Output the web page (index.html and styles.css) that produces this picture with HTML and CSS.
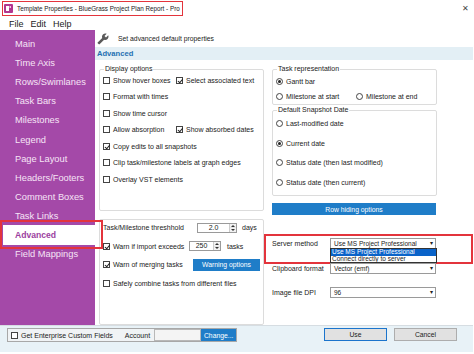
FILE: index.html
```html
<!DOCTYPE html>
<html lang="en">
<head>
  <meta charset="UTF-8" />
  <title>Template Properties</title>
  <link rel="stylesheet" href="styles.css">
</head>
<body>
<div class="window">

  <div class="titlebar">
    <div class="title-box">
      <svg class="app-icon" width="9" height="9" viewBox="0 0 9 9">
        <rect width="9" height="9" rx="1" fill="#b2368f"/>
        <rect x="2" y="2" width="3" height="5" fill="#fff"/>
        <rect x="5.5" y="2" width="1.5" height="2" fill="#f3c6e6"/>
      </svg>
      <span>Template Properties - BlueGrass Project Plan Report - Pro</span>
    </div>
    <span class="close">✕</span>
  </div>

  <div class="menubar">
    <span>File</span>
    <span>Edit</span>
    <span>Help</span>
  </div>

  <div class="main">
    <nav class="sidebar">
      <a>Main</a>
      <a>Time Axis</a>
      <a>Rows/Swimlanes</a>
      <a>Task Bars</a>
      <a>Milestones</a>
      <a>Legend</a>
      <a>Page Layout</a>
      <a>Headers/Footers</a>
      <a>Comment Boxes</a>
      <a>Task Links</a>
      <a class="active">Advanced</a>
      <a>Field Mappings</a>
    </nav>

    <section class="content">
      <div class="page-head">
        <svg class="wrench" width="12" height="12" viewBox="0 0 24 24">
          <path transform="translate(24 0) scale(-1 1)" fill="#5a5a5a" d="M22.7 19l-9.1-9.1c.9-2.3.4-5-1.5-6.9-2-2-5-2.4-7.4-1.3L9 6 6 9 1.6 4.7C.4 7.1.9 10.1 2.9 12.1c1.9 1.9 4.6 2.4 6.9 1.5l9.1 9.1c.4.4 1 .4 1.4 0l2.3-2.3c.5-.4.5-1.1.1-1.4z"/>
        </svg>
        <span>Set advanced default properties</span>
      </div>
      <div class="page-title">Advanced</div>

      <div class="columns">
        <div class="col">
          <fieldset class="group display">
            <legend>Display options</legend>
            <div class="row">
              <label class="check half"><span class="box"></span>Show hover boxes</label>
              <label class="check"><span class="box on"></span>Select associated text</label>
            </div>
            <div class="row"><label class="check"><span class="box"></span>Format with times</label></div>
            <div class="row"><label class="check"><span class="box"></span>Show time cursor</label></div>
            <div class="row">
              <label class="check half"><span class="box"></span>Allow absorption</label>
              <label class="check"><span class="box on"></span>Show absorbed dates</label>
            </div>
            <div class="row"><label class="check"><span class="box on"></span>Copy edits to all snapshots</label></div>
            <div class="row"><label class="check"><span class="box"></span>Clip task/milestone labels at graph edges</label></div>
            <div class="row"><label class="check"><span class="box"></span>Overlay VST elements</label></div>
          </fieldset>

          <div class="group import">
            <div class="row">
              <span class="threshold-label">Task/Milestone threshhold</span>
              <span class="spinner wide"><span class="spin-val">2.0</span><span class="spin-btn"></span></span>
              <span class="unit">days</span>
            </div>
            <div class="row">
              <label class="check half-wide"><span class="box on"></span>Warn if import exceeds</label>
              <span class="spinner"><span class="spin-val">250</span><span class="spin-btn"></span></span>
              <span class="unit">tasks</span>
            </div>
            <div class="row">
              <label class="check half-wide"><span class="box on"></span>Warn of merging tasks</label>
              <button class="blue-btn warn-btn">Warning options</button>
            </div>
            <div class="row"><label class="check"><span class="box"></span>Safely combine tasks from different files</label></div>
          </div>
        </div>

        <div class="col">
          <fieldset class="group task-rep">
            <legend>Task representation</legend>
            <div class="row"><label class="check"><span class="radio on"></span>Gantt bar</label></div>
            <div class="row">
              <label class="check radio-half"><span class="radio"></span>Milestone at start</label>
              <label class="check"><span class="radio"></span>Milestone at end</label>
            </div>
          </fieldset>

          <fieldset class="group snapshot">
            <legend>Default Snapshot Date</legend>
            <div class="row"><label class="check"><span class="radio"></span>Last-modified date</label></div>
            <div class="row"><label class="check"><span class="radio on"></span>Current date</label></div>
            <div class="row"><label class="check"><span class="radio"></span>Status date (then last modified)</label></div>
            <div class="row"><label class="check"><span class="radio"></span>Status date (then current)</label></div>
          </fieldset>

          <button class="blue-btn row-btn">Row hiding options</button>

          <div class="field server">
            <span class="field-label">Server method</span>
            <span class="select">Use MS Project Professional<span class="arrow">▾</span></span>
            <div class="dropdown">
              <div class="opt selected">Use MS Project Professional</div>
              <div class="opt">Connect directly to server</div>
            </div>
          </div>
          <div class="field">
            <span class="field-label">Clipboard format</span>
            <span class="select">Vector (emf)<span class="arrow">▾</span></span>
          </div>
          <div class="field">
            <span class="field-label">Image file DPI</span>
            <span class="select">96<span class="arrow">▾</span></span>
          </div>
        </div>
      </div>
    </section>
  </div>

  <div class="footer">
    <div class="enterprise">
      <label class="check"><span class="box"></span>Get Enterprise Custom Fields</label>
      <span class="account-label">Account</span>
      <span class="account-input"></span>
      <button class="blue-btn change-btn">Change...</button>
    </div>
    <div class="actions">
      <button class="btn default">Use</button>
      <button class="btn">Cancel</button>
    </div>
  </div>

</div>
</body>
</html>
```

FILE: styles.css
```css
* {
  box-sizing: border-box;
}
body {
  margin: 0;
  font-family: "Liberation Sans", Arial, sans-serif;
  font-size: 7px;
  color: #222;
  background-color: #fff;
}
.window {
  width: 473px;
}

/* title + menu */
.titlebar {
  height: 17px;
  display: flex;
  align-items: center;
  justify-content: space-between;
  padding: 0 4px 0 2px;
}
.title-box {
  display: flex;
  align-items: center;
  gap: 4px;
  height: 15px;
  padding: 0 2px 0 1px;
  border: 1.5px solid #e3343c;
  font-size: 6.3px;
}
.close {
  font-size: 8px;
  color: #444;
}
.menubar {
  height: 13px;
  display: flex;
  align-items: center;
  gap: 7px;
  padding-left: 9px;
  font-size: 9px;
}

/* body */
.main {
  display: flex;
  height: 295px;
}
.sidebar {
  width: 95px;
  flex-shrink: 0;
  background-color: #a449a8;
  padding-top: 4.5px;
  font-size: 9.3px;
}
.sidebar a {
  display: flex;
  align-items: center;
  height: 19.1px;
  padding-left: 15px;
  color: #f6e4f6;
}
.sidebar a.active {
  position: relative;
  margin-left: 3px;
  padding-left: 12px;
  background-color: #fff;
  color: #9b3fa0;
  font-weight: bold;
  font-size: 8.6px;
}
.sidebar a.active::after {
  content: "";
  position: absolute;
  top: -5px;
  bottom: -4px;
  left: -3px;
  right: -8px;
  border: 2px solid #e3343c;
}
.content {
  flex: 1;
}
.page-head {
  height: 17px;
  display: flex;
  align-items: center;
  gap: 9px;
  padding-left: 2px;
  font-size: 6.8px;
}
.page-title {
  height: 13px;
  line-height: 13px;
  padding-left: 2px;
  background-color: #e3eff5;
  color: #1f6fb2;
  font-weight: bold;
  font-size: 7.6px;
}
.columns {
  display: flex;
  gap: 8px;
  padding: 5px 0 0 4px;
}
.col {
  width: 165px;
  display: flex;
  flex-direction: column;
}

/* groups */
.group {
  margin: 0;
  border: 1px solid #dcdcdc;
  border-radius: 2px;
  padding: 0 0 0 3px;
}
.group legend {
  padding: 0 1px;
  margin-left: 1px;
  line-height: 8px;
}
.row {
  display: flex;
  align-items: center;
}
.display .row {
  height: 16.5px;
}
.display {
  padding-top: 0;
  padding-bottom: 22px;
}
.display .row:first-of-type {
  margin-top: -1px;
}
.import {
  margin-top: 8px;
  padding-top: 0;
  padding-bottom: 31px;
}
.import .row {
  height: 18.5px;
}
.import .row:first-child {
  margin-top: -1px;
}
.check {
  display: flex;
  align-items: center;
  gap: 3px;
  white-space: nowrap;
}
.half {
  width: 73px;
}
.half-wide {
  width: 86px;
}
.box {
  width: 7px;
  height: 7px;
  border: 1px solid #444;
  background-color: #fff;
  flex-shrink: 0;
  position: relative;
}
.box.on::after {
  content: "";
  position: absolute;
  left: 1.5px;
  top: 0;
  width: 2px;
  height: 3.5px;
  border: solid #222;
  border-width: 0 1px 1px 0;
  transform: rotate(40deg);
}
.radio {
  width: 7px;
  height: 7px;
  border: 1px solid #444;
  border-radius: 50%;
  background-color: #fff;
  flex-shrink: 0;
  display: flex;
  align-items: center;
  justify-content: center;
}
.radio.on::after {
  content: "";
  width: 3px;
  height: 3px;
  border-radius: 50%;
  background-color: #222;
}
.threshold-label {
  width: 94px;
}
.spinner {
  display: flex;
  height: 10px;
  width: 32px;
  border: 1px solid #9a9a9a;
  background-color: #fff;
}
.spinner.wide {
  width: 40px;
}
.spin-val {
  flex: 1;
  text-align: center;
  line-height: 8px;
}
.spin-btn {
  width: 7px;
  border-left: 1px solid #ccc;
  background: linear-gradient(#e6e6e6, #e6e6e6) center / 100% 1px no-repeat, #f2f2f2;
  position: relative;
}
.spin-btn::before,
.spin-btn::after {
  content: "";
  position: absolute;
  left: 1px;
  border-left: 2px solid transparent;
  border-right: 2px solid transparent;
}
.spin-btn::before {
  top: 1px;
  border-bottom: 2px solid #333;
}
.spin-btn::after {
  bottom: 1px;
  border-top: 2px solid #333;
}
.unit {
  margin-left: 5px;
}
.import .row:nth-child(2) .unit {
  margin-left: 6px;
}

/* buttons */
button {
  font-family: inherit;
  font-size: 6.8px;
  cursor: pointer;
}
.blue-btn {
  border: none;
  background-color: #1f7dc8;
  color: #fff;
  padding: 0;
}
.warn-btn {
  width: 67px;
  height: 12px;
  margin-left: 4px;
}
.row-btn {
  height: 12px;
  margin-top: 7px;
  width: 164px;
}

/* right column */
.task-rep {
  padding-top: 1px;
  padding-bottom: 0;
}
.task-rep .row {
  height: 15px;
}
.radio-half {
  width: 80px;
}
.snapshot {
  margin-top: 1px;
  padding-top: 0;
  padding-bottom: 3px;
}
.snapshot .row {
  height: 19.6px;
}
.field {
  display: flex;
  align-items: center;
  height: 12px;
}
.field + .field {
  margin-top: 13px;
}
.field:last-child {
  margin-top: 12px;
}
.server {
  margin-top: 22px;
  position: relative;
}
.server::after {
  content: "";
  position: absolute;
  left: -8px;
  right: -36px;
  top: -3px;
  bottom: -15px;
  border: 2px solid #e3343c;
}
.field-label {
  width: 58px;
}
.select {
  position: relative;
  width: 106px;
  height: 11px;
  line-height: 9px;
  padding-left: 3px;
  border: 1px solid #9a9a9a;
  background-color: #fff;
  font-size: 6.5px;
}
.arrow {
  position: absolute;
  right: 2px;
  top: 0;
  font-size: 6px;
}
.dropdown {
  position: absolute;
  left: 58px;
  top: 11px;
  width: 107px;
  border: 1px solid #333;
  background-color: #fff;
  font-size: 6.5px;
  z-index: 2;
}
.opt {
  height: 6.5px;
  line-height: 6.5px;
  padding-left: 1px;
}
.opt.selected {
  background-color: #0a63c9;
  color: #fff;
}

/* footer */
.footer {
  height: 27px;
  display: flex;
  align-items: flex-start;
  justify-content: space-between;
  padding: 2px 16px 0 7px;
  background-color: #e8f2f7;
  border-top: 1px solid #d6dde2;
}
.enterprise {
  display: flex;
  align-items: center;
  height: 14px;
  width: 230px;
  padding-left: 3px;
  border: 1px solid #a8a8a8;
  background-color: #f0f3f5;
}
.account-label {
  margin-left: 12px;
}
.account-input {
  width: 57px;
  height: 12px;
  margin-left: 4px;
  border: 1px solid #b8b8b8;
  background-color: #f4f4f4;
}
.change-btn {
  width: 42px;
  height: 12px;
}
.actions {
  display: flex;
  gap: 7px;
}
.btn {
  width: 63px;
  height: 13px;
  padding: 0;
  background-color: #e1e1e1;
  border: 1px solid #adadad;
  color: #222;
}
.btn.default {
  border-color: #1b74cc;
}
```
